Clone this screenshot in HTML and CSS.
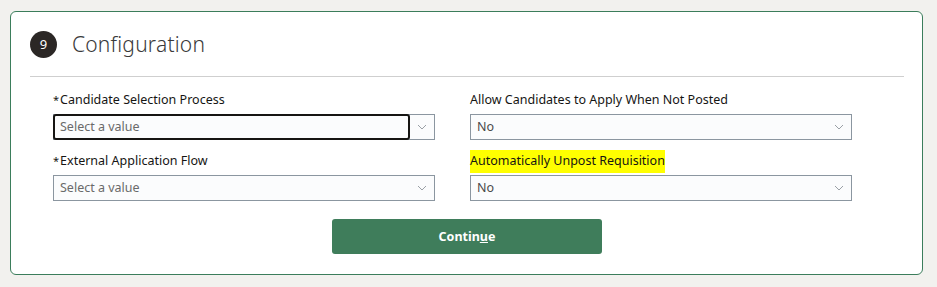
FILE: index.html
```html
<!DOCTYPE html>
<html>
<head>
<meta charset="utf-8">
<link rel="stylesheet" href="styles.css">
</head>
<body>
<div class="card">
  <div class="header">
    <span class="step">9</span>
    <h2 class="title">Configuration</h2>
  </div>
  <div class="sep"></div>
  <div class="form">
    <div class="field">
      <label class="label"><span class="req">*</span>Candidate Selection Process</label>
      <div class="select focused">
        <div class="value placeholder">Select a value</div>
        <div class="arrow"><svg width="10" height="6" viewBox="0 0 10 6"><path d="M1 1l4 4 4-4" fill="none" stroke="#9aa0a6" stroke-width="1"/></svg></div>
      </div>
    </div>
    <div class="field">
      <label class="label">Allow Candidates to Apply When Not Posted</label>
      <div class="select">
        <div class="value">No</div>
        <div class="arrow"><svg width="10" height="6" viewBox="0 0 10 6"><path d="M1 1l4 4 4-4" fill="none" stroke="#9aa0a6" stroke-width="1"/></svg></div>
      </div>
    </div>
    <div class="field">
      <label class="label"><span class="req">*</span>External Application Flow</label>
      <div class="select">
        <div class="value placeholder">Select a value</div>
        <div class="arrow"><svg width="10" height="6" viewBox="0 0 10 6"><path d="M1 1l4 4 4-4" fill="none" stroke="#9aa0a6" stroke-width="1"/></svg></div>
      </div>
    </div>
    <div class="field">
      <label class="label"><span class="hl">Automatically Unpost Requisition</span></label>
      <div class="select">
        <div class="value">No</div>
        <div class="arrow"><svg width="10" height="6" viewBox="0 0 10 6"><path d="M1 1l4 4 4-4" fill="none" stroke="#9aa0a6" stroke-width="1"/></svg></div>
      </div>
    </div>
  </div>
  <div class="actions">
    <button class="btn">Contin<u>u</u>e</button>
  </div>
</div>
</body>
</html>
```
FILE: styles.css
```css
html, body {
  margin: 0;
  padding: 0;
}
body {
  background: #f2f1ee;
  font-family: "Noto Sans", "Open Sans", sans-serif;
  width: 937px;
  height: 287px;
  overflow: hidden;
}
.card {
  box-sizing: border-box;
  margin: 11px 0 0 10px;
  width: 913px;
  height: 264px;
  background: #fff;
  border: 1px solid #3b7d5b;
  border-radius: 6px;
  padding: 0 18px 0 19px;
}
.header {
  display: flex;
  align-items: center;
  height: 64px;
}
.step {
  width: 27px;
  height: 27px;
  border-radius: 50%;
  background: #2b2725;
  color: #fff;
  font-size: 13px;
  display: flex;
  align-items: center;
  justify-content: center;
  margin-right: 15px;
}
.title {
  margin: 0 0 1px;
  font-weight: 300;
  font-size: 21px;
  color: #3a3a3a;
  letter-spacing: 0.2px;
}
.sep {
  height: 1px;
  background: #cfcfcf;
}
.form {
  display: grid;
  grid-template-columns: 382px 382px;
  column-gap: 35px;
  row-gap: 13px;
  padding: 15px 0 0 23px;
}
.label {
  display: block;
  font-size: 12.5px;
  color: #161513;
  height: 16px;
  line-height: 16px;
  margin-bottom: 6px;
}
.req {
  font-size: 11px;
  vertical-align: top;
  margin-right: 1px;
  color: #161513;
}
.hl {
  background: #ffff00;
  padding: 2px 0 4px;
}
.select {
  display: flex;
  height: 26px;
  box-sizing: border-box;
  border: 1px solid #8b96a0;
  background: #fbfcfd;
}
.value {
  flex: 1;
  font-size: 12.5px;
  color: #4a4a4a;
  line-height: 24px;
  padding-left: 6px;
}
.placeholder {
  color: #6a6a6a;
}
.arrow {
  width: 24px;
  display: flex;
  align-items: center;
  justify-content: center;
}
.select.focused .value {
  margin: -1px 0 -1px -1px;
  border: 2px solid #161513;
  border-radius: 3px;
  line-height: 22px;
  padding-left: 5px;
}
.actions {
  display: flex;
  justify-content: center;
  padding-top: 18px;
}
.btn {
  width: 270px;
  height: 35px;
  background: #3f7d5b;
  color: #fff;
  border: none;
  border-radius: 3px;
  font-family: inherit;
  font-weight: 700;
  font-size: 12.5px;
}
```
